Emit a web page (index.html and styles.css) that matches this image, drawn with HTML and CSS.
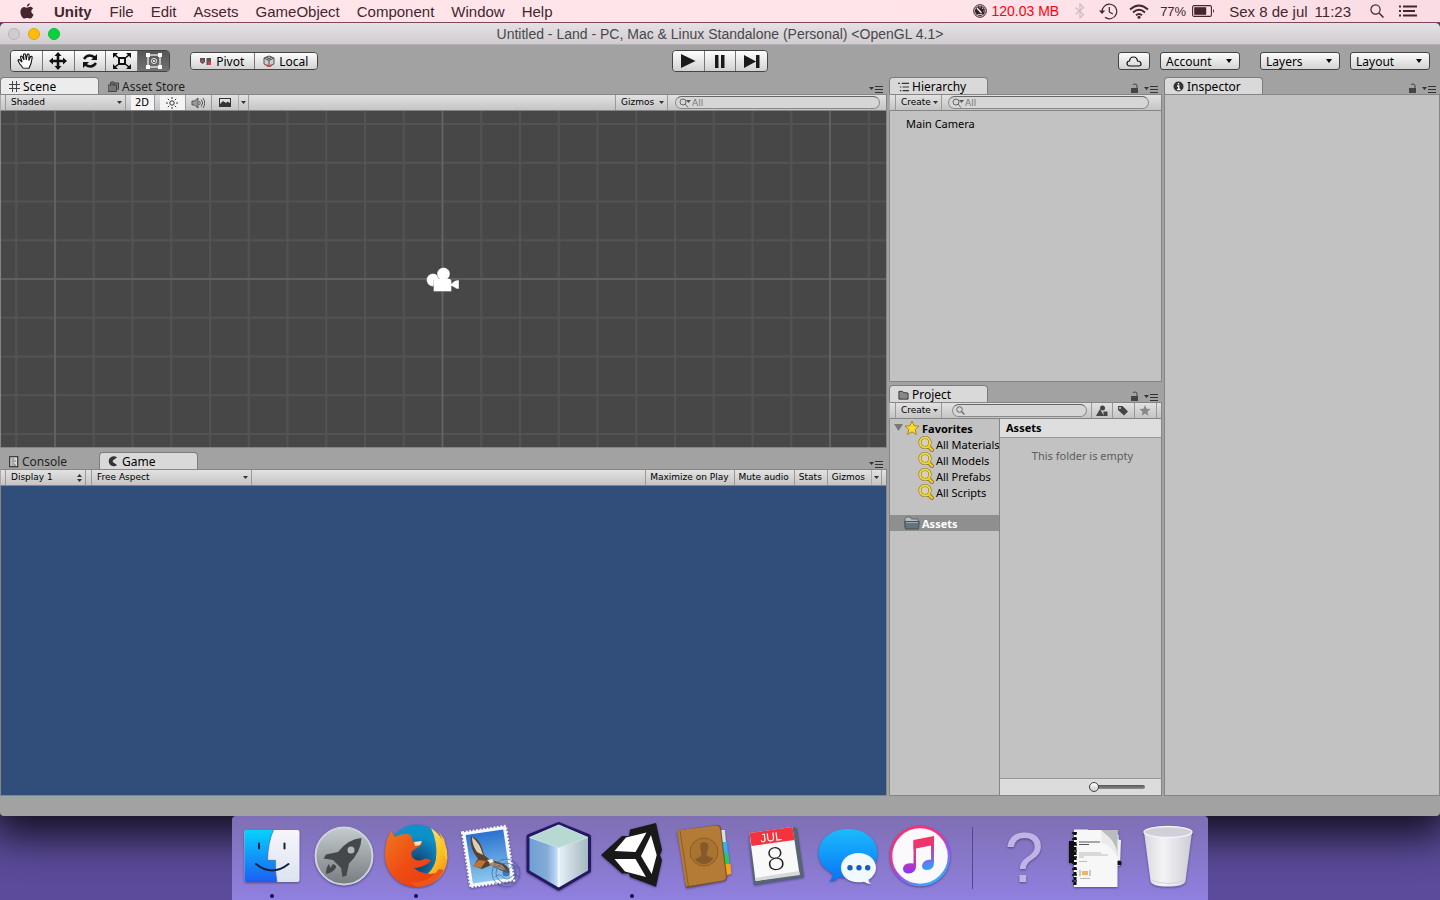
FILE: index.html
```html
<!DOCTYPE html>
<html lang="en">
  <head>
    <meta charset="UTF-8" />
    <meta name="viewport" content="width=device-width, initial-scale=1.0" />
    <title>Untitled - Land - Unity</title>
    <link rel="stylesheet" href="styles.css">
  </head>
  <body>
    <!-- shared icons -->
    <svg class="sprites" aria-hidden="true">
      <symbol id="pane-menu" viewBox="0 0 14 8">
        <path d="M0 2h5L2.500 5z" fill="#333" />
        <path d="M6 1.500h8M6 4.500h8M6 7.500h8" stroke="#333" />
      </symbol>
      <symbol id="lock" viewBox="0 0 9 10">
        <rect x="1" y="5" width="7" height="5" fill="#444" />
        <path d="M7 5V3Q7 1 5 1T3 2" fill="none" stroke="#444" />
      </symbol>
      <symbol id="search-drop" viewBox="0 0 13 10">
        <circle cx="4" cy="4" r="3" fill="none" stroke="#666" />
        <path d="M6 6l3 3.500" stroke="#666" />
        <path d="M7 2h5L9.500 5z" fill="#555" />
      </symbol>
      <symbol id="search-fav" viewBox="0 0 16 16">
        <path d="M11 11l3 3" stroke="#8c7a3a" stroke-width="4" stroke-linecap="round" />
        <circle cx="7" cy="6.500" r="5" fill="#d6d2c0" stroke="#8c7a3a" stroke-width="3.200" />
        <circle cx="7" cy="6.500" r="5" fill="none" stroke="#f7d838" stroke-width="2" />
        <path d="M10.500 10.500l3.500 3.500" stroke="#f5c81c" stroke-width="2.400" stroke-linecap="round" />
      </symbol>
    </svg>

    <header class="menubar">
      <nav class="menus">
        <a href="#" class="apple" aria-label="Apple">
          <svg width="14" height="17" viewBox="0 0 14 17"><path d="M9.800 0.300c.1 1.600-1.300 3.400-3 3.400C6.600 2 8 .5 9.800.3zM7 4.700c.7 0 1.700-.9 3.100-.9 1.300 0 2.300.6 3 1.600-2.600 1.500-2.200 4.900.5 6-.6 1.700-2 4.200-3.500 4.200-1.100 0-1.500-.7-2.900-.7s-1.800.7-2.900.7C2.600 15.600.4 12.300.4 8.800c0-3.300 2-4.900 4-4.900 1.200 0 2 .8 2.600.8z" fill="#45262f" /></svg>
        </a>
        <a href="#" class="app-name">Unity</a>
        <a href="#">File</a>
        <a href="#">Edit</a>
        <a href="#">Assets</a>
        <a href="#">GameObject</a>
        <a href="#">Component</a>
        <a href="#">Window</a>
        <a href="#">Help</a>
      </nav>
      <div class="status">
        <svg width="14" height="14" viewBox="0 0 14 14"><circle cx="7" cy="7" r="6.300" fill="#ddc8ce" stroke="#39222a" /><circle cx="7" cy="7" r="5" fill="#39222a" /><path d="M4 4l4.500 5M7 2.500v1M10 4l-.7.7M11.500 7h-1" stroke="#fff" stroke-width="1.200" /><path d="M4.500 10.500h5" stroke="#cbb" /></svg>
        <span class="memory">120.03 MB</span>
        <svg class="bluetooth" width="12" height="16" viewBox="0 0 12 16"><path d="M1.500 4.500l8 7L6 15V1l3.500 3.500-8 7" fill="none" stroke="#d4bac2" stroke-width="1.300" /></svg>
        <svg class="timemachine" width="19" height="17" viewBox="0 0 19 17"><path d="M3.200 9.500A7.300 7.300 0 1 1 6 14.300" fill="none" stroke="#45262f" stroke-width="1.200" /><path d="M0 7.500h6.200L3 11z" fill="#45262f" /><path d="M10.300 4v5l3.500 2" fill="none" stroke="#45262f" stroke-width="1.200" /></svg>
        <svg class="wifi" width="20" height="15" viewBox="0 0 20 15"><path d="M1 5.500q9-8 18 0M4 8.500q6-5.400 12 0M7 11.300q3-2.600 6 0" fill="none" stroke="#45262f" stroke-width="1.900" /><circle cx="10" cy="13.300" r="1.500" fill="#45262f" /></svg>
        <span class="percent">77%</span>
        <svg class="battery" width="23" height="12" viewBox="0 0 23 12"><rect x=".6" y=".6" width="18.800" height="10.800" rx="1.500" fill="none" stroke="#45262f" stroke-width="1.100" /><rect x="2.200" y="2.200" width="12" height="7.600" fill="#45262f" /><path d="M21 4q2 2 0 4z" fill="#45262f" /></svg>
        <span class="date">Sex 8 de jul</span>
        <span class="time">11:23</span>
        <svg class="spotlight" width="14" height="14" viewBox="0 0 14 14"><circle cx="5.500" cy="5.500" r="4.600" fill="none" stroke="#45262f" stroke-width="1.200" /><path d="M9 9l4.500 4.500" stroke="#45262f" stroke-width="1.500" /></svg>
        <svg width="19" height="12" viewBox="0 0 19 12"><path d="M4 1.500h14M4 6h12M4 10.500h14" stroke="#45262f" stroke-width="1.800" /><path d="M0 1.500h2M0 6h2M0 10.500h2" stroke="#45262f" stroke-width="1.800" /></svg>
      </div>
    </header>

    <main class="window">
      <div class="titlebar">
        <div class="lights">
          <button class="light" aria-label="Close"></button>
          <button class="light yellow" aria-label="Minimize"></button>
          <button class="light green" aria-label="Zoom"></button>
        </div>
        <h1>Untitled - Land - PC, Mac &amp; Linux Standalone (Personal) &lt;OpenGL 4.1&gt;</h1>
      </div>

      <div class="toolbar">
        <div class="toolbar-left">
          <div class="btn-group tools">
            <button aria-label="Hand"><svg width="18" height="18" viewBox="0 0 18 18"><path d="M6 16l-3.500-4.500L1 8.500q.5-1.500 2-.5l2 2-1.500-5q.8-1.700 2 0L7 8 6.500 2.500q1-1.600 2 0L9.300 8l.9-5.500q1.200-1.300 1.900.3L11.800 8.500l1.800-4q1.600-.6 1.600 1L14 11.500 12 16.300z" fill="#fff" stroke="#111" stroke-width="1.100" /></svg></button>
            <button aria-label="Move"><svg width="18" height="18" viewBox="0 0 18 18"><path d="M9 0l3.500 4H10.300v3.700H14V5.500L18 9l-4 3.500v-2.200h-3.700V14h2.200L9 18l-3.500-4h2.200v-3.700H4v2.200L0 9l4-3.500v2.200h3.700V4H5.500z" fill="#111" /></svg></button>
            <button aria-label="Rotate"><svg width="16" height="16" viewBox="0 0 16 16"><path d="M2 6Q6 0 13 4.500M14 10Q10 16 3 11.500" fill="none" stroke="#111" stroke-width="2.400" /><path d="M15 1v6H9zM1 15V9h6z" fill="#111" /></svg></button>
            <button aria-label="Scale"><svg width="18" height="16" viewBox="0 0 18 16"><rect x="6" y="5" width="6" height="6" fill="#eee" stroke="#111" stroke-width="2" /><path d="M1 1l4 3.500M17 1l-4 3.500M1 15l4-3.500M17 15l-4-3.500" stroke="#111" stroke-width="1.600" /><path d="M0 0h5L0 5zM18 0v5l-5-5zM0 16v-5l5 5zM18 16h-5l5-5z" fill="#111" /></svg></button>
            <button class="active" aria-label="Rect"><svg width="18" height="18" viewBox="0 0 18 18"><rect x="3" y="3" width="12" height="12" fill="none" stroke="#ddd" stroke-width="1.500" /><path d="M1 1h4v4H1zM13 1h4v4h-4zM1 13h4v4H1zM13 13h4v4h-4z" fill="#fff" /><circle cx="9" cy="9" r="2.600" fill="none" stroke="#ddd" /><circle cx="9" cy="9" r="1" fill="#fff" /></svg></button>
          </div>
          <div class="btn-group labelled">
            <button><svg width="12" height="9" viewBox="0 0 12 9"><path d="M0 1h5v4L2.500 7 0 5zM6.500 1H11v7H6.500z" fill="#555" /><path d="M1 3h2.500v2H1zM8 4.500h3V8H8z" fill="#d33e4c" /></svg>Pivot</button>
            <button><svg width="12" height="12" viewBox="0 0 12 12"><path d="M1 3l5-2 5 2v6l-5 2.500L1 9z" fill="#ccc" stroke="#555" /><path d="M1 3l5 2.500L11 3M6 5.500v6M3 2l5 2.500M9 2L4 4.500" fill="none" stroke="#555" /><path d="M3 10l3 1.500L9 10" fill="none" stroke="#d33e4c" stroke-width="1.500" /></svg>Local</button>
          </div>
        </div>
        <div class="btn-group playback">
          <button aria-label="Play"><svg width="16" height="14" viewBox="0 0 16 14"><path d="M1 0l14.500 7L1 14z" fill="#1a1a1a" /></svg></button>
          <button aria-label="Pause"><svg width="10" height="13" viewBox="0 0 10 13"><path d="M0 0h3.500v13H0zM6 0h3.500v13H6z" fill="#1a1a1a" /></svg></button>
          <button aria-label="Step"><svg width="16" height="13" viewBox="0 0 16 13"><path d="M0 0l12 6.500L0 13zM12 0h3.500v13H12z" fill="#1a1a1a" /></svg></button>
        </div>
        <div class="toolbar-right">
          <button class="cloud" aria-label="Cloud services"><svg width="16" height="11" viewBox="0 0 16 11"><path d="M4 10Q1 10 1 7.500T3.500 5Q4 1 7.500 1t4 4Q14.500 5 15 7.500T12.500 10z" fill="none" stroke="#111" stroke-width="1.200" /></svg></button>
          <select class="drop" aria-label="Account"><option>Account</option></select>
          <select class="drop layers" aria-label="Layers"><option>Layers</option></select>
          <select class="drop" aria-label="Layout"><option>Layout</option></select>
        </div>
      </div>

      <div class="workspace">
        <div class="column left">
          <section class="panel">
            <div class="tabs">
              <button class="tab selected focused"><svg width="11" height="11" viewBox="0 0 11 11"><path d="M3.500 0v11M7.500 0v11M0 3.500h11M0 7.500h11" stroke="#444" /></svg>Scene</button>
              <button class="tab"><svg width="11" height="11" viewBox="0 0 11 11"><path d="M0 4h8.500v6.500H0zM2 2h8.500v6l-1 1" fill="#777" stroke="#444" /><path d="M2.500 4V1.500Q4.500-.5 6 1.500V4" fill="none" stroke="#444" /></svg>Asset Store</button>
              <button class="pane-btn" aria-label="Pane options"><svg width="14" height="8"><use href="#pane-menu" /></svg></button>
            </div>
            <div class="bar">
              <select class="mini shading" aria-label="Shading"><option>Shaded</option></select>
              <button class="flat on two-d">2D</button>
              <button class="flat on icon" aria-label="Lighting"><svg width="12" height="12" viewBox="0 0 12 12"><circle cx="6" cy="6" r="2.200" fill="none" stroke="#333" /><path d="M6 0v2M6 10v2M0 6h2M10 6h2M1.800 1.800l1.400 1.400M8.800 8.800l1.400 1.400M10.200 1.800L8.800 3.200M3.200 8.800l-1.400 1.400" stroke="#333" /></svg></button>
              <button class="flat icon" aria-label="Audio"><svg width="14" height="12" viewBox="0 0 14 12"><path d="M1 4h2.500L7 1v10L3.500 8H1z" fill="#999" stroke="#555" /><path d="M8.500 4q1.500 2 0 4M10.200 2.500q3 3.500 0 7M12 1q3.500 5 0 10" fill="none" stroke="#555" /></svg></button>
              <button class="flat icon effects" aria-label="Effects"><svg width="12" height="9" viewBox="0 0 12 9"><rect width="12" height="9" fill="#333" /><path d="M1 1h10v4L8.500 3.500 7 5 4 3 1 6z" fill="#ddd" /></svg></button>
              <button class="flat caret" aria-label="Effect list"></button>
              <span class="spacer"></span>
              <button class="mini gizmos">Gizmos</button>
              <label class="search scene-search"><svg width="13" height="10"><use href="#search-drop" /></svg><input type="text" placeholder="All" aria-label="Search scene"></label>
            </div>
            <div class="view scene">
              <svg viewBox="-442 -168 886 336" preserveAspectRatio="xMidYMid slice" aria-label="Scene view">
                <defs>
                  <pattern id="cells" width="38.750" height="38.750" patternUnits="userSpaceOnUse">
                    <path d="M0 0v38.750M38.750 0v38.750M0 0h38.750M0 38.750h38.750" stroke="#535353" stroke-width="2" />
                  </pattern>
                </defs>
                <rect x="-900" y="-600" width="1800" height="1200" fill="url(#cells)" />
                <path d="M-387.500-600V600M0-600V600M387.500-600V600M-900 0H900" stroke="#656565" stroke-width="1.500" />
                <g fill="#fff" stroke="#333" stroke-opacity=".3">
                  <circle cx="-9.500" cy="1" r="6.500" />
                  <circle cx="1" cy="-5" r="6.500" />
                  <path d="M-9 1H9v3.500l3-2.500q2-1 4.500-1v9q-3 0-4.500-1.500L9 7v5.500H-9z" />
                </g>
                <path d="M-9 0h17v5h-17z" fill="#fff" />
              </svg>
            </div>
          </section>

          <section class="panel">
            <div class="tabs">
              <button class="tab"><svg width="10" height="12" viewBox="0 0 10 12"><rect x=".7" y=".7" width="8" height="10" fill="#ddd" stroke="#333" stroke-width="1.200" /><path d="M2.500 3h3M2.500 5h4.500M2.500 7h3M2.500 9h4.500" stroke="#555" stroke-width=".8" /></svg>Console</button>
              <button class="tab selected"><svg width="11" height="11" viewBox="0 0 11 11"><path d="M9 1.500A5 5 0 1 0 9 9L4.800 6V4.500z" fill="#333" /></svg>Game</button>
              <button class="pane-btn" aria-label="Pane options"><svg width="14" height="8"><use href="#pane-menu" /></svg></button>
            </div>
            <div class="bar">
              <select class="mini updown" aria-label="Display"><option>Display 1</option></select>
              <select class="mini aspect" aria-label="Aspect"><option>Free Aspect</option></select>
              <span class="spacer"></span>
              <button class="flat first">Maximize on Play</button>
              <button class="flat">Mute audio</button>
              <button class="flat">Stats</button>
              <button class="flat game-gizmos">Gizmos</button>
              <button class="flat caret" aria-label="Gizmo list"></button>
            </div>
            <div class="view game"></div>
          </section>
        </div>

        <div class="column middle">
          <section class="panel">
            <div class="tabs">
              <button class="tab selected"><svg width="11" height="10" viewBox="0 0 12 10"><path d="M0 1h2M4 1h8M2 5h1.500M5 5h7M2 9h1.500M5 9h7" stroke="#333" stroke-width="1.200" /></svg>Hierarchy</button>
              <button class="pane-btn" aria-label="Lock"><svg width="9" height="10"><use href="#lock" /></svg></button>
              <button class="pane-btn" aria-label="Pane options"><svg width="14" height="8"><use href="#pane-menu" /></svg></button>
            </div>
            <div class="bar">
              <button class="mini create">Create</button>
              <label class="search hierarchy-search"><svg width="13" height="10"><use href="#search-drop" /></svg><input type="text" placeholder="All" aria-label="Search hierarchy"></label>
            </div>
            <div class="view">
              <ul class="objects"><li>Main Camera</li></ul>
            </div>
          </section>

          <section class="panel">
            <div class="tabs">
              <button class="tab selected"><svg width="11" height="10" viewBox="0 0 12 10"><path d="M1 3V1h4l1 1.500h3.500V3H11v6.500H1z" fill="#888" stroke="#333" /></svg>Project</button>
              <button class="pane-btn" aria-label="Lock"><svg width="9" height="10"><use href="#lock" /></svg></button>
              <button class="pane-btn" aria-label="Pane options"><svg width="14" height="8"><use href="#pane-menu" /></svg></button>
            </div>
            <div class="bar">
              <button class="mini create">Create</button>
              <label class="search project-search"><svg width="9" height="9" viewBox="0 0 9 9"><circle cx="3.500" cy="3.500" r="2.800" fill="none" stroke="#666" /><path d="M5.500 5.500l3 3" stroke="#666" stroke-width="1.300" /></svg><input type="text" aria-label="Search project"></label>
              <button class="flat filter" aria-label="Search by type"><svg width="12" height="11" viewBox="0 0 12 11"><path d="M4 4l4 7H0z" fill="#444" /><circle cx="6.500" cy="3" r="2.500" fill="#444" /><path d="M7.500 6.500h4V11h-4z" fill="#444" /></svg></button>
              <button class="flat filter" aria-label="Search by label"><svg width="12" height="11" viewBox="0 0 12 11"><path d="M1 1h4.500L11 6.500 7 10.500 1 5z" fill="#444" /><circle cx="3" cy="3" r="1" fill="#ccc" /></svg></button>
              <button class="flat filter" aria-label="Save search"><svg width="12" height="11" viewBox="0 0 12 11"><path d="M6 0l1.500 3.700 4 .3-3 2.700.9 4L6 8.600l-3.400 2.100.9-4L.5 4l4-.3z" fill="#888" /></svg></button>
            </div>
            <div class="view project">
              <ul class="tree">
                <li class="root"><svg width="30" height="16" viewBox="0 0 30 16"><path d="M0 4h9L4.500 11z" fill="#777" /><path d="M18 1l2 4.700 5 .4-3.800 3.400 1.200 5L18 11.800l-4.400 2.700 1.200-5L11 6.100l5-.4z" fill="#fbdc2c" stroke="#a8862a" stroke-linejoin="round" /></svg>Favorites</li>
                <li class="fav"><svg width="16" height="16"><use href="#search-fav" /></svg>All Materials</li>
                <li class="fav"><svg width="16" height="16"><use href="#search-fav" /></svg>All Models</li>
                <li class="fav"><svg width="16" height="16"><use href="#search-fav" /></svg>All Prefabs</li>
                <li class="fav"><svg width="16" height="16"><use href="#search-fav" /></svg>All Scripts</li>
                <li class="folder"><svg width="16" height="14" viewBox="0 0 16 14"><path d="M1 12V2.500L2 1h4.500l1 2H14v9z" fill="#b5c0c3" stroke="#5c686b" /><path d="M.7 5.500h14.600L14.500 13h-13z" fill="#63747a" stroke="#44555b" /><path d="M2 6.500h12" stroke="#9babb0" /></svg>Assets</li>
              </ul>
              <div class="browser">
                <h2>Assets</h2>
                <p>This folder is empty</p>
                <footer><input type="range" min="0" max="100" value="0" aria-label="Icon size"></footer>
              </div>
            </div>
          </section>
        </div>

        <div class="column right">
          <section class="panel">
            <div class="tabs">
              <button class="tab selected"><svg width="11" height="11" viewBox="0 0 11 11"><circle cx="5.500" cy="5.500" r="5" fill="#333" /><path d="M5.500 2v1.500M4 5h1.800v3.500M4 8.500h3.500" fill="none" stroke="#fff" stroke-width="1.300" /></svg>Inspector</button>
              <button class="pane-btn" aria-label="Lock"><svg width="9" height="10"><use href="#lock" /></svg></button>
              <button class="pane-btn" aria-label="Pane options"><svg width="14" height="8"><use href="#pane-menu" /></svg></button>
            </div>
            <div class="view inspector"></div>
          </section>
        </div>
      </div>
      <div class="statusbar"></div>
    </main>

    <footer class="desktop">
      <nav class="dock">
        <a href="#" class="running" aria-label="Finder">
          <svg viewBox="0 0 72 72">
            <defs>
              <linearGradient id="finder-l" x2="0" y2="1"><stop stop-color="#06d1fd" /><stop offset="1" stop-color="#1c5ff2" /></linearGradient>
              <linearGradient id="finder-r" x2="0" y2="1"><stop stop-color="#f6f6fa" /><stop offset="1" stop-color="#dce3f0" /></linearGradient>
            </defs>
            <rect x="8.500" y="10" width="55" height="52" rx="2" fill="url(#finder-r)" />
            <path d="M37.500 10Q32 22 31.500 40.300H39.500Q39 52 41 62H10.500Q8.500 62 8.500 60V12Q8.500 10 10.500 10z" fill="url(#finder-l)" />
            <path d="M37.500 10Q32 22 31.500 40.300H39.500Q39 52 41 62" fill="none" stroke="#1b4c8c" stroke-opacity=".5" />
            <path d="M23 23.500v5M48.500 23.500v5M20 44Q36 57 52.500 44" fill="none" stroke="#14203a" stroke-width="2" stroke-linecap="round" />
          </svg>
        </a>
        <a href="#" aria-label="Launchpad">
          <svg viewBox="0 0 72 72">
            <defs><linearGradient id="launch" x2="0" y2="1"><stop stop-color="#c3cccf" /><stop offset="1" stop-color="#777c7f" /></linearGradient></defs>
            <circle cx="36" cy="36" r="28.500" fill="url(#launch)" stroke="#ccd3dc" stroke-width="2" />
            <path d="M53.500 18Q53 32 41 43.500L38.500 55.500 34.500 57 33 48 25 40 15.500 38.500 18 34.500 30 32Q40 19 53.500 18z" fill="#44484b" />
            <path d="M25 44q5 2 2 5-3 4-9 5 0-7 3-10l1.500 4z" fill="#44484b" />
            <circle cx="43" cy="30" r="3.500" fill="#b2b8ba" />
          </svg>
        </a>
        <a href="#" class="running" aria-label="Firefox">
          <svg viewBox="0 0 72 72">
            <defs>
              <radialGradient id="globe" cx=".5" cy=".7"><stop stop-color="#16386c" /><stop offset="1" stop-color="#0c91c9" /></radialGradient>
              <linearGradient id="fox" x2="1" y2="1"><stop stop-color="#f0781c" /><stop offset=".5" stop-color="#ef4c14" /><stop offset="1" stop-color="#ea3a10" /></linearGradient>
              <linearGradient id="flame" x2="1" y2="1"><stop stop-color="#fff6a4" /><stop offset=".6" stop-color="#fbc326" /><stop offset="1" stop-color="#f47b15" /></linearGradient>
            </defs>
            <circle cx="36.500" cy="32.500" r="28" fill="url(#globe)" />
            <path d="M51 8Q67 19 67.500 38 66 57 50 64 39 66 33 62 53 55 56 39 58 22 51 8z" fill="url(#flame)" />
            <path d="M59 12l5 7 3 12v9l-3-4-1-14z" fill="#fcc629" />
            <path d="M11 11l4 6Q23 12 31 15l2 7 8-1 1 3-5 4-5 3q-2 5 2 8 5 3 10 0 5-1 7 2l-4 3q-7 4-13 4 9 8 23 5Q46 66 35 67 12 65 5.500 42 3 25 11 11z" fill="url(#fox)" />
            <path d="M29 62Q48 64 59 49l5 1Q55 67 37 67z" fill="#ee5519" />
            <path d="M34 22l8-1-2 4-5 1z" fill="#ffe0c0" />
          </svg>
        </a>
        <a href="#" aria-label="Mail">
          <svg viewBox="0 0 72 72">
            <defs><linearGradient id="sky" x2="0" y2="1"><stop stop-color="#2a72cf" /><stop offset="1" stop-color="#8cc9ee" /></linearGradient></defs>
            <g transform="rotate(-8.500 36 36)">
              <rect x="14" y="9" width="44" height="55" fill="#f7f8fa" stroke="#f7f8fa" stroke-width="2.500" stroke-dasharray="2 1.500" />
              <rect x="17" y="12" width="38" height="49" fill="url(#sky)" />
            </g>
            <path d="M19 16q10 3 13 19l5 4 15 5q7 5 5 9-9-2-18-8l-9 4-9-3 5-7Q17 28 19 16z" fill="#5b402d" />
            <path d="M20 17q8 6 11 18l-6-3q-5-7-5-15z" fill="#dcd0bb" />
            <path d="M37 41l13 4 6 7q-10-3-19-8z" fill="#a98c69" />
            <path d="M20 46l7-6 7 1-5 7z" fill="#bb7636" />
            <path d="M35 40l5-1 2 3-4 1z" fill="#f4ead9" />
            <g fill="none" stroke="#42619b" stroke-opacity=".65"><circle cx="54" cy="53" r="14" /><circle cx="54" cy="53" r="10" /><path d="M42 48q4-4 8 0t8 0 9 0M43 57q4-4 8 0t8 0 8 0" /></g>
            <circle cx="54" cy="53" r="3.500" fill="#305694" fill-opacity=".7" />
          </svg>
        </a>
        <a href="#" aria-label="NetBeans">
          <svg viewBox="0 0 72 72">
            <defs>
              <linearGradient id="cube-l"><stop stop-color="#6fa0d8" /><stop offset=".6" stop-color="#85aad6" /><stop offset="1" stop-color="#c9e4ff" /></linearGradient>
              <linearGradient id="cube-r"><stop stop-color="#e7f0f8" /><stop offset="1" stop-color="#a5b8c0" /></linearGradient>
            </defs>
            <path d="M34.700 4.500L64.500 16.500v34L34.700 68 5 50.500v-34z" fill="#241a63" stroke="#241a63" stroke-width="5" stroke-linejoin="round" />
            <path d="M5.500 17.500l29.200 9.500v40.500L5.500 50.500z" fill="url(#cube-l)" />
            <path d="M64 17.500l-29.300 9.500v40.500L64 50.500z" fill="url(#cube-r)" />
            <path d="M34.700 5L64 17.500 34.700 27.500 5.500 17.500z" fill="#b7d9d2" stroke="#cbe5e3" />
            <path d="M34.700 28v39" stroke="#eff8ff" stroke-width="2" />
          </svg>
        </a>
        <a href="#" class="running" aria-label="Unity">
          <svg viewBox="0 0 72 72">
            <path d="M5 35L26 16h7l1-6.500L60 3l6 27-2 5 2 5-6 26.700L34 57l-1-3.500h-7z" fill="#191919" />
            <path d="M18.500 31L30 17.500 50.500 12.500 39.500 32zM18.500 39h21L50 57 29 51.500zM55 15l5.700 20L55.700 54 45 36z" fill="#fff" />
          </svg>
        </a>
        <a href="#" aria-label="Contacts">
          <svg viewBox="0 0 72 72">
            <path d="M51 10h6l1 13h-6z" fill="#dadde0" /><path d="M52 22h7l1 12h-7z" fill="#2db5ed" /><path d="M53 33h7.500l1 12h-7.500z" fill="#20ce61" /><path d="M54 44h8.500l1 10-8 2z" fill="#f5a21c" />
            <path d="M10 10.500L49 5q3 0 4 3l6 48q0 4-3 5l-38 7z" fill="#79501f" />
            <path d="M9 10.500L48 5.500q3 0 4 3l6 48q0 3-3 4l-37 6z" fill="#b37b36" />
            <path d="M12 10.500l8.500 56" stroke="#8c5d26" />
            <circle cx="36" cy="32" r="14" fill="#a9742f" stroke="#8a5d26" />
            <path d="M32 27q0-5 4-5t4.500 5l-2 7q1 3 7 4-4 6-9.500 6-6 0-9-5 6-2 6.500-5z" fill="#85592a" />
          </svg>
        </a>
        <a href="#" aria-label="Calendar">
          <svg viewBox="0 0 72 72">
            <path d="M8 16l6 49 50-8-7-49-4-1 5 46-42 7z" fill="#566570" />
            <path d="M9.500 13L52.500 7l7 47-44 7z" fill="#f9f9fa" />
            <path d="M9.500 13L52.500 7l2 13-43 6z" fill="#f5333f" />
            <path d="M15 58l44-7 1 4-44 6z" fill="#d7d8db" />
            <g transform="rotate(-7 34 34)" text-anchor="middle">
              <text x="33" y="21" class="cal-month">JUL</text>
              <text x="35" y="50" class="cal-day">8</text>
            </g>
          </svg>
        </a>
        <a href="#" aria-label="Messages">
          <svg viewBox="0 0 72 72">
            <defs><linearGradient id="bubble" x2="0" y2="1"><stop stop-color="#1bbcfc" /><stop offset="1" stop-color="#0873f5" /></linearGradient></defs>
            <path d="M36 9c17 0 29.500 10.500 29.500 24.500S53 58 36 58q-5 0-9-1-4 4-10 4.500 4-3 3.500-8Q6.500 46 6.500 33.500C6.500 19.500 19 9 36 9z" fill="url(#bubble)" />
            <path d="M46.500 33c10 0 17.500 6.500 17.500 14.700 0 5-3 9.300-7.500 12q0 3 2.500 4.300-5-.5-7-2.200-2 .5-5.500.5C36.500 62.300 29 56 29 47.700S36.500 33 46.500 33z" fill="#f1f8fe" />
            <circle cx="38" cy="47.700" r="2.700" fill="#145dbe" /><circle cx="47" cy="47.700" r="2.700" fill="#145dbe" /><circle cx="55.700" cy="47.700" r="2.700" fill="#145dbe" />
          </svg>
        </a>
        <a href="#" aria-label="iTunes">
          <svg viewBox="0 0 72 72">
            <defs>
              <linearGradient id="ring" x1=".2" x2=".8" y2="1"><stop stop-color="#fc3164" /><stop offset=".35" stop-color="#f4318a" /><stop offset=".6" stop-color="#a34dfa" /><stop offset="1" stop-color="#23bff9" /></linearGradient>
              <linearGradient id="note" gradientUnits="userSpaceOnUse" x1="24" y1="18" x2="24" y2="54"><stop stop-color="#fb3156" /><stop offset=".45" stop-color="#d83c96" /><stop offset="1" stop-color="#8a35f5" /></linearGradient>
              <linearGradient id="note-r" gradientUnits="userSpaceOnUse" x1="24" y1="18" x2="30" y2="52"><stop stop-color="#fb3156" /><stop offset=".4" stop-color="#e03a80" /><stop offset=".75" stop-color="#6f70e9" /><stop offset="1" stop-color="#2aa6f4" /></linearGradient>
            </defs>
            <circle cx="36" cy="36" r="29" fill="#fafafc" stroke="url(#ring)" stroke-width="2.500" />
            <path d="M29.500 20v23.500q-10-1-10.500 5 0 5 6 5 7-1 7-7V29z" fill="url(#note)" />
            <path d="M29.500 20L50 16v26q0 8-7 8-5 0-5-4.500 1-6 9-6V25.500L29.500 29z" fill="url(#note-r)" />
          </svg>
        </a>
        <span class="divider"></span>
        <a href="#" aria-label="Missing application">
          <svg viewBox="0 0 72 72"><text x="36" y="62" text-anchor="middle" class="missing">?</text></svg>
        </a>
        <a href="#" aria-label="Documents">
          <svg viewBox="0 0 72 72">
            <path d="M14 9h14v8H14zM56 14l3 1v18h-3z" fill="#7ecdf5" />
            <path d="M9 21h8v22H9z" fill="#111" /><path d="M55 19l6 1-1 26h-5z" fill="#f0f0f0" /><circle cx="59" cy="43" r="2.500" fill="#111" />
            <path d="M14 10h43.500v57H14z" fill="#f7f7f7" />
            <path d="M41 10h16.500v27Q56 23 41 10z" fill="#bbb" /><path d="M41 11q1 8 0 12 8-1 17 15Q57 20 41 11z" fill="#eaeaea" />
            <path d="M15 12v54" stroke="#111" stroke-width="3" stroke-dasharray="3 2" /><path d="M12 13h5M12 19h5M12 25h5M12 31h5M12 37h5M12 43h5M12 49h5M12 55h5M12 61h5" stroke="#111" stroke-width="1.500" />
            <path d="M19 22h21M19 24.500h10" stroke="#555" /><path d="M19 33h22M19 35h29M19 37h5M19 41.500h8M20 58.500h10" stroke="#aaa" stroke-width=".8" />
            <path d="M22 51h6v4h-6z" fill="#f4b467" /><path d="M20 50v6M30 50v6" stroke="#999" />
          </svg>
        </a>
        <a href="#" aria-label="Trash">
          <svg viewBox="0 0 72 72">
            <defs><linearGradient id="bin"><stop stop-color="#d7d7df" /><stop offset=".4" stop-color="#f4f4f6" /><stop offset="1" stop-color="#ccccd5" /></linearGradient></defs>
            <path d="M12 12l6.500 49q1 5.500 17.500 5.500T53.500 61L60 12z" fill="url(#bin)" />
            <ellipse cx="36" cy="12" rx="24" ry="5.500" fill="#d0d0d8" stroke="#f4f4f8" stroke-width="1.500" />
            <path d="M19 60q17 7 34 0" fill="none" stroke="#d2d2da" />
          </svg>
        </a>
      </nav>
    </footer>
  </body>
</html>
```
FILE: styles.css
```css
* {
  box-sizing: border-box;
}

body {
  margin: 0;
  height: 100vh;
  display: flex;
  flex-direction: column;
  overflow: hidden;
  background: #5b4b9a;
  font-family: "Noto Sans", "Open Sans", sans-serif;
  font-size: 11px;
  color: #000;
}

button,
select,
input {
  font-family: inherit;
  font-size: inherit;
  color: inherit;
  margin: 0;
  padding: 0;
  border: none;
  border-radius: 0;
  background: none;
}

select {
  appearance: none;
}

ul {
  list-style: none;
  margin: 0;
  padding: 0;
}

svg {
  flex-shrink: 0;
}

.sprites {
  display: none;
}

/* menu bar */
.menubar {
  position: relative;
  z-index: 1;
  display: flex;
  justify-content: space-between;
  height: 23px;
  flex-shrink: 0;
  padding: 0 22px 0 20px;
  background: linear-gradient(to right, #ffe5ea 60%, #f8dde4);
  border-bottom: 1px solid #804558;
  font-family: "Liberation Sans", Arial, sans-serif;
  font-size: 15px;
  color: #45262f;
}

.menus,
.status {
  display: flex;
  align-items: center;
}

.menus {
  gap: 17px;
}

.menus a {
  color: inherit;
  text-decoration: none;
}

.menus .apple {
  display: flex;
  margin-right: 3px;
}

.app-name {
  margin-right: 1px;
  font-weight: bold;
}

.memory {
  margin: 0 15px 0 4px;
  font-size: 14px;
  color: #ff0010;
}

.timemachine {
  margin-left: 13px;
}

.wifi {
  margin: 0 11px;
}

.percent {
  font-size: 13px;
}

.battery {
  margin: 0 14px 0 6px;
}

.time {
  margin-left: 7px;
}

.spotlight {
  margin: 0 15px 0 19px;
}

/* editor window */
.window {
  flex: 1;
  min-height: 0;
  display: flex;
  flex-direction: column;
  background: #a2a2a2;
  border-radius: 5px 5px 4px 4px;
  box-shadow: 0 12px 40px 8px rgba(0, 0, 0, 0.8);
}

.titlebar {
  display: grid;
  grid-template-columns: 1fr auto 1fr;
  align-items: center;
  height: 22px;
  flex-shrink: 0;
  padding: 0 8px;
  background: linear-gradient(#e5e2e5, #d0ccd0);
  border-bottom: 1px solid #b4b1b4;
  border-radius: 5px 5px 0 0;
}

.titlebar h1 {
  margin: 0;
  font-family: "Liberation Sans", Arial, sans-serif;
  font-size: 14px;
  font-weight: normal;
  color: #4a464a;
}

.lights {
  display: flex;
  gap: 8px;
}

.light {
  width: 12px;
  height: 12px;
  border: 1px solid #b8b4b8;
  border-radius: 50%;
  background: #cfcccf;
}

.yellow {
  border-color: #e5a00f;
  background: #ffbd0a;
}

.green {
  border-color: #0cb937;
  background: #08d33f;
}

/* main toolbar */
.toolbar {
  display: grid;
  grid-template-columns: 1fr auto 1fr;
  align-items: center;
  height: 32px;
  flex-shrink: 0;
  padding: 0 10px;
  font-size: 12px;
}

.toolbar-left,
.toolbar-right {
  display: flex;
  align-items: center;
}

.toolbar-left {
  gap: 20px;
}

.toolbar-right {
  justify-content: flex-end;
  gap: 10px;
}

.btn-group {
  display: flex;
  height: 22px;
  border: 1px solid #444;
  border-radius: 4px;
  overflow: hidden;
}

.btn-group button {
  flex: 1;
  display: flex;
  align-items: center;
  justify-content: center;
  gap: 4px;
  background: linear-gradient(#fdfdfd, #d2d2d2);
}

.btn-group button + button {
  border-left: 1px solid #777;
}

.tools {
  width: 160px;
}

.playback {
  width: 96px;
}

.labelled {
  width: 128px;
  height: 18px;
}

.btn-group .active {
  background: linear-gradient(#555, #727272);
}

.cloud,
.drop {
  height: 18px;
  border: 1px solid #444;
  border-radius: 3px;
  background: linear-gradient(#fdfdfd, #d2d2d2);
}

.cloud {
  display: flex;
  align-items: center;
  justify-content: center;
  width: 32px;
}

.drop {
  width: 80px;
  padding: 0 5px;
  background: url("data:image/svg+xml,%3Csvg xmlns='http://www.w3.org/2000/svg' width='6' height='4'%3E%3Cpath d='M0 0h6L3 4z'/%3E%3C/svg%3E") no-repeat right 7px center, linear-gradient(#fdfdfd, #d2d2d2);
}

.layers {
  margin-left: 10px;
}

/* panels */
.workspace {
  flex: 1;
  min-height: 0;
  display: flex;
  gap: 2px;
}

.column {
  display: grid;
  gap: 3px;
}

.left {
  flex: 1;
  min-width: 0;
  gap: 4px;
  grid-template-rows: minmax(0, 371fr) minmax(0, 344fr);
}

.middle {
  width: 273px;
  grid-template-rows: minmax(0, 305fr) minmax(0, 411fr);
}

.right {
  width: 276px;
}

.panel {
  min-width: 0;
  display: flex;
  flex-direction: column;
}

.tabs {
  display: flex;
  align-items: flex-end;
  height: 17px;
  flex-shrink: 0;
  padding-right: 4px;
}

.tab {
  display: flex;
  align-items: center;
  gap: 3px;
  width: 99px;
  height: 17px;
  padding: 1px 8px 0;
  border: 1px solid transparent;
  border-bottom: none;
  font-size: 12px;
  line-height: 15px;
  color: #222;
  white-space: nowrap;
}

.tab.selected {
  background: #d9d9d9;
  border-color: #7c7c7c;
  border-radius: 4px 4px 0 0;
  color: #000;
}

.tab.focused {
  background: #ececec;
}

.pane-btn {
  display: flex;
  margin-left: 5px;
  padding-bottom: 1px;
}

.tab + .pane-btn {
  margin-left: auto;
}

.bar {
  display: flex;
  align-items: stretch;
  height: 17px;
  flex-shrink: 0;
  padding: 0 4px;
  background: linear-gradient(#e2e2e2, #c4c4c4);
  border: 1px solid #858585;
  border-left-color: #aaa;
  font-family: "DejaVu Sans", sans-serif;
  font-size: 9px;
}

.middle .bar {
  padding-left: 5px;
}

.mini,
.flat {
  height: 15px;
  line-height: 15px;
  white-space: nowrap;
}

.mini {
  padding: 0 14px 0 5px;
  border: 1px solid #999;
  border-width: 0 1px;
  text-align: left;
  background: url("data:image/svg+xml,%3Csvg xmlns='http://www.w3.org/2000/svg' width='5' height='3'%3E%3Cpath d='M0 0h5L2.5 3z' fill='%23333'/%3E%3C/svg%3E") no-repeat right 3px center;
}

.updown {
  width: 81px;
  margin-right: 5px;
  background-image: url("data:image/svg+xml,%3Csvg xmlns='http://www.w3.org/2000/svg' width='5' height='8'%3E%3Cpath d='M0 3h5L2.5 0zM0 5h5L2.5 8z' fill='%23333'/%3E%3C/svg%3E");
}

.flat {
  padding: 0 5px 0 4px;
  border-right: 1px solid #999;
}

.flat.on {
  background: #f4f4f4;
}

.flat.icon,
.filter {
  display: flex;
  align-items: center;
  justify-content: center;
  width: 26px;
}

.flat.filter {
  width: 22px;
}

.shading {
  width: 121px;
}

.two-d {
  width: 24px;
  margin: 0 5px;
  font-size: 10px;
}

.effects.icon {
  border-right: none;
}

.flat.caret {
  width: 11px;
  background: url("data:image/svg+xml,%3Csvg xmlns='http://www.w3.org/2000/svg' width='5' height='3'%3E%3Cpath d='M0 0h5L2.5 3z' fill='%23333'/%3E%3C/svg%3E") no-repeat center;
  border-left: 1px solid #aaa;
}

.spacer {
  flex: 1;
}

.flat.first {
  border-left: 1px solid #999;
}

.flat.game-gizmos {
  padding-right: 6px;
  border-right: none;
}

.aspect {
  width: 161px;
}

.gizmos {
  width: 53px;
}

.create {
  width: 47px;
  padding-right: 10px;
}

.search {
  min-width: 0;
  display: flex;
  align-items: center;
  height: 13px;
  align-self: center;
  padding: 0 3px;
  border: 1px solid #888;
  border-top-color: #666;
  border-radius: 7px;
  background: #d6d6d6;
}

.search input {
  flex: 1;
  min-width: 0;
  width: 0;
  height: 11px;
  outline: none;
}

.search input::placeholder {
  color: #777;
}

.scene-search {
  width: 205px;
  margin: 0 2px 0 7px;
}

.hierarchy-search {
  flex: 1;
  margin: 0 8px 0 6px;
}

.project-search {
  flex: 1;
  margin: 0 4px 0 10px;
}

.project-search + .filter {
  border-left: 1px solid #999;
}

.view {
  flex: 1;
  min-height: 0;
  border: 1px solid #858585;
  border-top: none;
  background: #c2c2c2;
}

.scene {
  background: #474747;
}

.scene svg {
  display: block;
  width: 100%;
  height: 100%;
}

.game {
  background: #314d79;
}

.inspector {
  border-top: 1px solid #858585;
}

.objects {
  padding: 5px 16px;
  line-height: 16px;
}

/* project browser */
.project {
  display: flex;
}

.tree {
  width: 109px;
  padding-top: 1px;
  overflow: hidden;
}

.tree li {
  display: flex;
  align-items: center;
  height: 16px;
  white-space: nowrap;
}

.tree .root {
  padding-left: 4px;
  font-weight: bold;
}

.tree .root svg {
  margin-right: -2px;
}

.tree .fav {
  padding-left: 28px;
  gap: 2px;
}

.tree .folder {
  margin-top: 15px;
  padding-left: 14px;
  gap: 2px;
  background: #8f8f8f;
  color: #fff;
  font-weight: bold;
}

.browser {
  flex: 1;
  display: flex;
  flex-direction: column;
  border-left: 1px solid #858585;
}

.browser h2 {
  margin: 0;
  padding: 0 6px;
  background: #dedede;
  border-bottom: 1px solid #999;
  font-size: 11px;
  line-height: 18px;
}

.browser p {
  flex: 1;
  margin: 10px 0 0;
  padding-left: 4px;
  text-align: center;
  line-height: 16px;
  color: #5c5c5c;
}

.browser footer {
  display: flex;
  align-items: center;
  justify-content: flex-end;
  height: 17px;
  padding-right: 16px;
  background: #dcdcdc;
  border-top: 1px solid #999;
}

.browser input {
  width: 56px;
  height: 11px;
  appearance: none;
}

.browser input::-webkit-slider-runnable-track {
  height: 4px;
  border-radius: 2px;
  background: linear-gradient(#555, #8e8e8e);
}

.browser input::-webkit-slider-thumb {
  appearance: none;
  width: 10px;
  height: 10px;
  margin-top: -3px;
  border: 1px solid #444;
  border-radius: 50%;
  background: linear-gradient(#fff, #ccc);
}

.statusbar {
  height: 20px;
  flex-shrink: 0;
}

/* dock */
.desktop {
  position: relative;
  display: flex;
  justify-content: center;
  height: 84px;
  flex-shrink: 0;
}

.dock {
  display: flex;
  padding: 4px 4px 0;
  border-radius: 4px 4px 0 0;
  background: linear-gradient(#7f6fb4, #9080df);
}

.dock a {
  display: flex;
  flex-direction: column;
  align-items: center;
  width: 72px;
}

.dock a svg {
  width: 72px;
  height: 72px;
  overflow: visible;
  filter: drop-shadow(0 1px 1px rgba(30, 20, 70, 0.5));
}

.running::after {
  content: "";
  width: 4px;
  height: 4px;
  margin-top: 2px;
  border-radius: 50%;
  background: #150b52;
}

.divider {
  width: 1px;
  height: 62px;
  margin: 7px 15px 0 16px;
  background: #55468f;
}

.cal-month {
  font: 12px "Liberation Sans", sans-serif;
  fill: #fff;
}

.cal-day {
  font: 300 32px Lato, "Liberation Sans", sans-serif;
  fill: #222;
}

.missing {
  font: 70px "Liberation Sans", sans-serif;
  fill: #c0b4e6;
}
```
